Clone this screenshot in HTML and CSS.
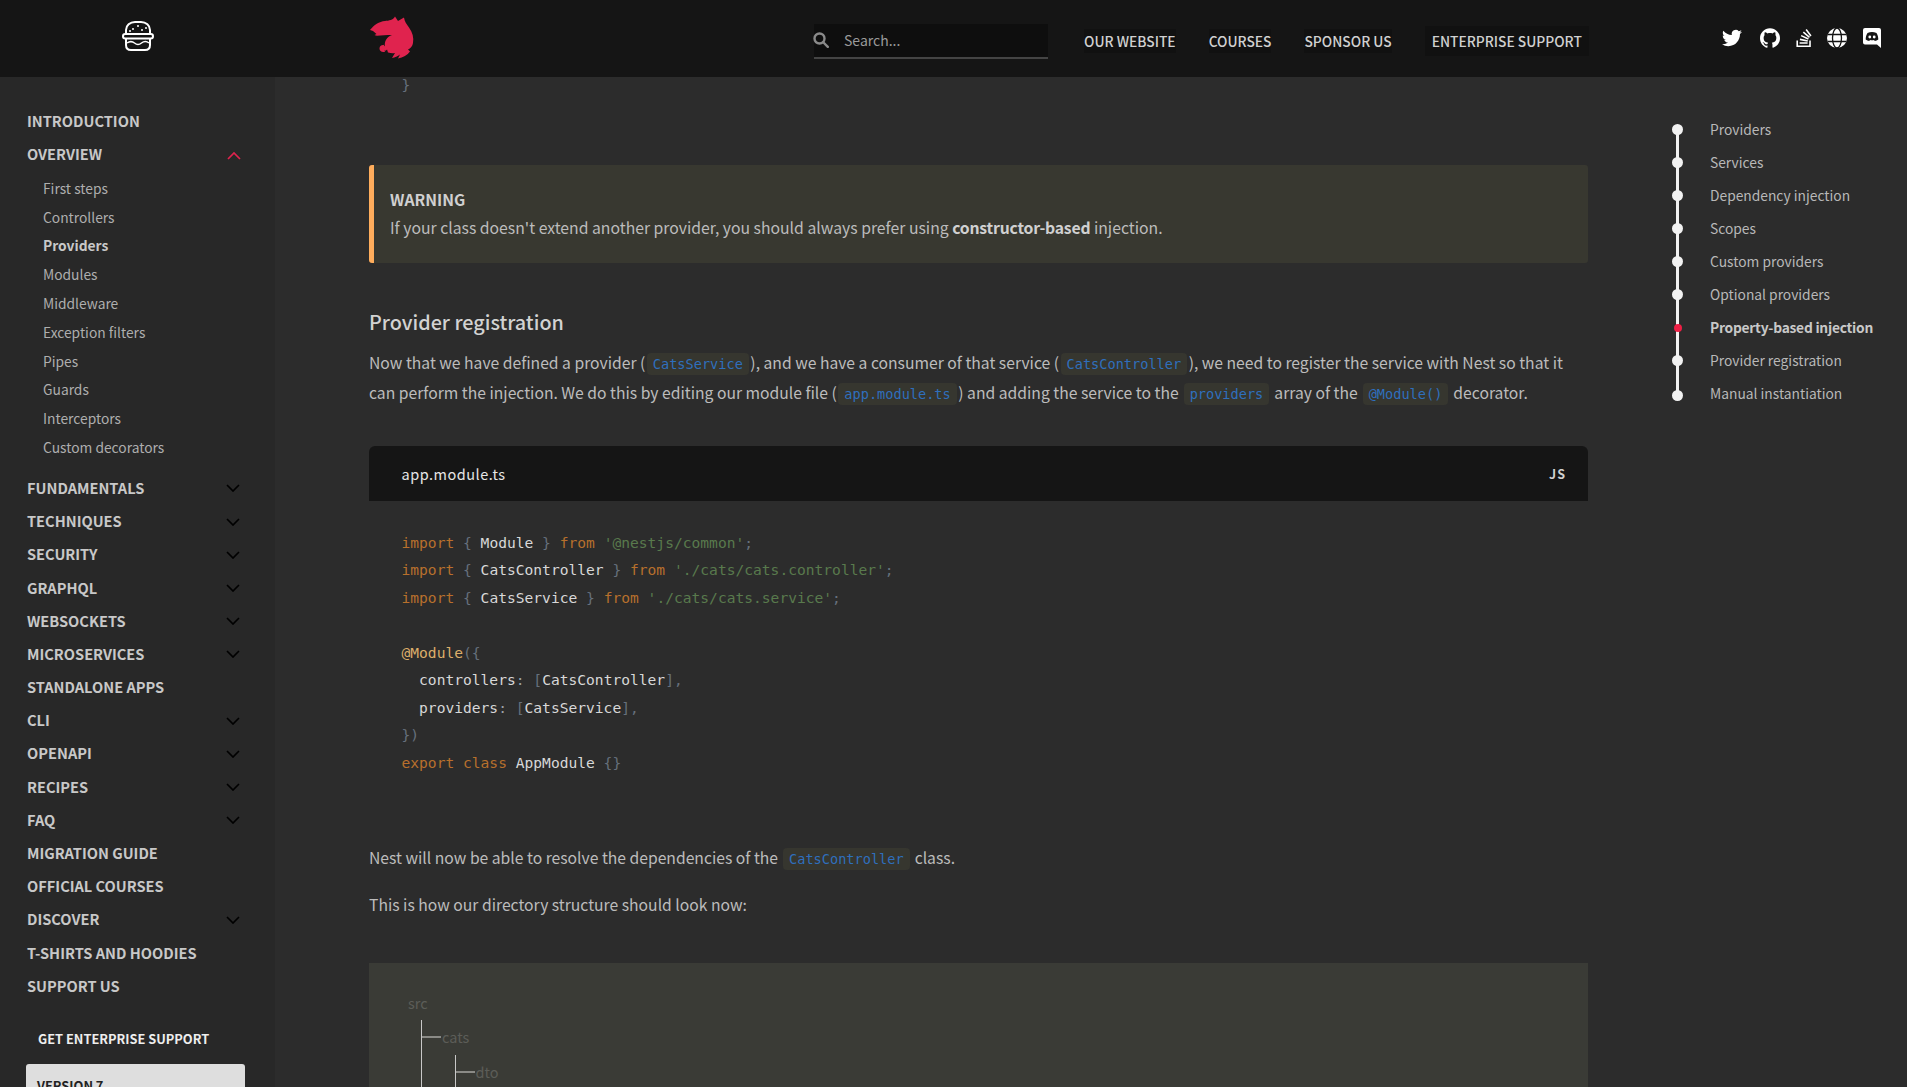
FILE: index.html
```html
<!DOCTYPE html>
<html lang="en">
<head>
  <meta charset="UTF-8" />
  <meta name="viewport" content="width=device-width, initial-scale=1.0" />
  <title>Providers | NestJS</title>
  <link rel="stylesheet" href="styles.css">
</head>
<body>
  <header class="topbar">
    <div class="burger-cell">
      <svg class="burger" viewBox="0 0 32 30" fill="none" stroke="#fff" stroke-width="2">
        <path d="M4 13V9C4 4.500 8 1 13 1h6c5 0 9 3.500 9 8v4" />
        <rect x="1" y="13" width="30" height="4.500" rx="2.250" />
        <path d="M4 17.500V24c0 3 2 5 5 5h14c3 0 5-2 5-5v-6.500" />
        <path d="M5 22c3-2 5-2 7.500 0s4.500 2 7 0 5-2 7.500 0" stroke-width="1.500" />
        <circle cx="11" cy="8" r="1" fill="#fff" stroke="none" />
        <circle cx="16" cy="5" r="1" fill="#fff" stroke="none" />
        <circle cx="20" cy="9" r="1" fill="#fff" stroke="none" />
        <circle cx="24" cy="7" r="1" fill="#fff" stroke="none" />
        <circle cx="8" cy="10" r="1" fill="#fff" stroke="none" />
      </svg>
    </div>
    <div class="topbar-main">
      <svg class="logo" viewBox="0 0 60 60">
        <path fill="#e0234e" d="M10 21C14 16 19 12.500 25 12c4-.300 8-1 10-4.500l3 4.500 6-3.500c.500 4 2.500 6.500 5 10 3.500 5 5 10 4 15.500-.500 3-2.500 5.500-5 6.500l2 2c-2.500 3.500-7 6-12 7l2-4c-2.500 2-5 3-8 3.500l3-5c-3.500.500-6.500 0-9-1.500-3.500 1.500-6.500 0-6.500-3 0-2.500 2-4 4.500-3.500-1-1.500-3-3.500-4-6l-3-2-2.500-2 2-1-3.500-3z" />
        <path fill="#151515" d="M14 26.500c5 .500 11-.500 18-.500-5 2-8 6-7 11.500-1.500-2.500-3.500-3.500-5.500-3.500-2-2.500-3.500-5-5.500-7.500z" />
        <path fill="#151515" d="M28 44c-1.500-.500-3-1-4-2.500 1.500.500 2.500 0 3-1 .500 1.500 1 2.500 1 3.500z" />
      </svg>
      <div class="search">
        <svg class="search-icon" viewBox="0 0 16 16" fill="none" stroke="#8a8a8a" stroke-width="2.400">
          <circle cx="6.500" cy="6.500" r="5" />
          <path d="M10 10l4.800 4.800" stroke-linecap="round" />
        </svg>
        <span>Search...</span>
      </div>
      <nav class="topnav">
        <a class="topnav-link">OUR WEBSITE</a>
        <a class="topnav-link">COURSES</a>
        <a class="topnav-link">SPONSOR US</a>
        <a class="topnav-link topnav-support">ENTERPRISE SUPPORT</a>
      </nav>
    </div>
    <div class="socials">
      <svg class="icon-twitter" viewBox="0 0 24 24" fill="#fff"><path d="M23.953 4.570a10 10 0 01-2.825.775 4.958 4.958 0 002.163-2.723c-.951.555-2.005.959-3.127 1.184a4.920 4.920 0 00-8.384 4.482C7.690 8.095 4.067 6.130 1.640 3.162a4.822 4.822 0 00-.666 2.475c0 1.710.870 3.213 2.188 4.096a4.904 4.904 0 01-2.228-.616v.060a4.923 4.923 0 003.946 4.827 4.996 4.996 0 01-2.212.085 4.936 4.936 0 004.604 3.417 9.867 9.867 0 01-6.102 2.105c-.390 0-.779-.023-1.170-.067a13.995 13.995 0 007.557 2.209c9.053 0 13.998-7.496 13.998-13.985 0-.210 0-.420-.015-.630A9.935 9.935 0 0024 4.590z" /></svg>
      <svg class="icon-github" viewBox="0 0 24 24" fill="#fff"><path d="M12 .297c-6.630 0-12 5.373-12 12 0 5.303 3.438 9.800 8.205 11.385.600.113.820-.258.820-.577 0-.285-.010-1.040-.015-2.040-3.338.724-4.042-1.610-4.042-1.610C4.422 18.070 3.633 17.700 3.633 17.700c-1.087-.744.084-.729.084-.729 1.205.084 1.838 1.236 1.838 1.236 1.070 1.835 2.809 1.305 3.495.998.108-.776.417-1.305.760-1.605-2.665-.300-5.466-1.332-5.466-5.930 0-1.310.465-2.380 1.235-3.220-.135-.303-.540-1.523.105-3.176 0 0 1.005-.322 3.300 1.230.960-.267 1.980-.399 3-.405 1.020.006 2.040.138 3 .405 2.280-1.552 3.285-1.230 3.285-1.230.645 1.653.240 2.873.120 3.176.765.840 1.230 1.910 1.230 3.220 0 4.610-2.805 5.625-5.475 5.920.420.360.810 1.096.810 2.220 0 1.606-.015 2.896-.015 3.286 0 .315.210.690.825.570C20.565 22.092 24 17.592 24 12.297c0-6.627-5.373-12-12-12" /></svg>
      <svg class="icon-stack" viewBox="0 0 24 24" fill="#fff"><path d="M15.725 0l-1.720 1.277 6.390 8.588 1.716-1.277L15.725 0zm-3.940 3.418l-1.369 1.644 8.225 6.850 1.369-1.644-8.225-6.850zm-3.150 4.465l-.905 1.940 9.702 4.517.904-1.940-9.701-4.517zm-1.850 4.860l-.440 2.093 10.473 2.201.440-2.092-10.473-2.203zM1.890 15.470V24h19.190v-8.530h-2.133v6.397H4.021v-6.396H1.890zm4.265 2.133v2.130h10.660v-2.130H6.154Z" /></svg>
      <svg class="icon-globe" viewBox="0 0 20 20">
        <circle cx="10" cy="10" r="10" fill="#fff" />
        <g fill="none" stroke="#151515" stroke-width="1.300">
          <ellipse cx="10" cy="10" rx="4.500" ry="10" />
          <path d="M.500 6.500h19M.500 13.500h19" />
        </g>
      </svg>
      <svg class="icon-discord" viewBox="0 0 18 20">
        <path fill="#fff" d="M2 0h14a2 2 0 012 2v18l-4-3.500H2a2 2 0 01-2-2V2a2 2 0 012-2z" />
        <path fill="#151515" d="M4.500 5c3-1.200 6-1.200 9 0 1.200 1.800 1.800 4 1.800 6.500-1.100.900-2.300 1.400-3.500 1.500l-.8-1.100c-1.300.300-2.700.300-4 0l-.8 1.100c-1.200-.100-2.400-.600-3.500-1.500C2.700 9 3.300 6.800 4.500 5z" />
        <circle cx="6.800" cy="9" r="1.400" fill="#fff" />
        <circle cx="11.200" cy="9" r="1.400" fill="#fff" />
      </svg>
    </div>
  </header>

  <div class="page">
    <aside class="sidebar">
      <a class="nav-item">INTRODUCTION</a>
      <a class="nav-item">OVERVIEW
        <svg class="chevron chevron-open" viewBox="0 0 14 8"><path d="M1 7l6-6 6 6" /></svg>
      </a>
      <ul class="nav-children">
        <li>First steps</li>
        <li>Controllers</li>
        <li class="active">Providers</li>
        <li>Modules</li>
        <li>Middleware</li>
        <li>Exception filters</li>
        <li>Pipes</li>
        <li>Guards</li>
        <li>Interceptors</li>
        <li>Custom decorators</li>
      </ul>
      <a class="nav-item">FUNDAMENTALS <svg class="chevron" viewBox="0 0 14 8"><path d="M1 1l6 6 6-6" /></svg></a>
      <a class="nav-item">TECHNIQUES <svg class="chevron" viewBox="0 0 14 8"><path d="M1 1l6 6 6-6" /></svg></a>
      <a class="nav-item">SECURITY <svg class="chevron" viewBox="0 0 14 8"><path d="M1 1l6 6 6-6" /></svg></a>
      <a class="nav-item">GRAPHQL <svg class="chevron" viewBox="0 0 14 8"><path d="M1 1l6 6 6-6" /></svg></a>
      <a class="nav-item">WEBSOCKETS <svg class="chevron" viewBox="0 0 14 8"><path d="M1 1l6 6 6-6" /></svg></a>
      <a class="nav-item">MICROSERVICES <svg class="chevron" viewBox="0 0 14 8"><path d="M1 1l6 6 6-6" /></svg></a>
      <a class="nav-item">STANDALONE APPS</a>
      <a class="nav-item">CLI <svg class="chevron" viewBox="0 0 14 8"><path d="M1 1l6 6 6-6" /></svg></a>
      <a class="nav-item">OPENAPI <svg class="chevron" viewBox="0 0 14 8"><path d="M1 1l6 6 6-6" /></svg></a>
      <a class="nav-item">RECIPES <svg class="chevron" viewBox="0 0 14 8"><path d="M1 1l6 6 6-6" /></svg></a>
      <a class="nav-item">FAQ <svg class="chevron" viewBox="0 0 14 8"><path d="M1 1l6 6 6-6" /></svg></a>
      <a class="nav-item">MIGRATION GUIDE</a>
      <a class="nav-item">OFFICIAL COURSES</a>
      <a class="nav-item">DISCOVER <svg class="chevron" viewBox="0 0 14 8"><path d="M1 1l6 6 6-6" /></svg></a>
      <a class="nav-item">T-SHIRTS AND HOODIES</a>
      <a class="nav-item">SUPPORT US</a>
      <a class="enterprise-link">GET ENTERPRISE SUPPORT</a>
      <div class="version-box">VERSION 7</div>
    </aside>

    <main class="content">
      <pre class="code-tail"><span class="p">}</span></pre>

      <div class="warning">
        <strong class="warning-title">WARNING</strong>
        <p>If your class doesn't extend another provider, you should always prefer using <strong class="strong-tight">constructor-based</strong> injection.</p>
      </div>

      <h3 class="section-title">Provider registration</h3>
      <p class="text text-first">Now that we have defined a provider (<code>CatsService</code>), and we have a consumer of that service (<code>CatsController</code>), we need to register the service with Nest so that it can perform the injection. We do this by editing our module file (<code>app.module.ts</code>) and adding the service to the <code>providers</code> array of the <code>@Module()</code> decorator.</p>

      <div class="code-block">
        <div class="code-header">
          <span class="code-file">app.module.ts</span>
          <span class="code-lang">JS</span>
        </div>
<pre class="code-body"><span class="k">import</span> <span class="p">{</span> Module <span class="p">}</span> <span class="k">from</span> <span class="s">'@nestjs/common'</span><span class="p">;</span>
<span class="k">import</span> <span class="p">{</span> CatsController <span class="p">}</span> <span class="k">from</span> <span class="s">'./cats/cats.controller'</span><span class="p">;</span>
<span class="k">import</span> <span class="p">{</span> CatsService <span class="p">}</span> <span class="k">from</span> <span class="s">'./cats/cats.service'</span><span class="p">;</span>

<span class="d">@Module</span><span class="p">({</span>
  controllers<span class="n">:</span> <span class="p">[</span>CatsController<span class="p">],</span>
  providers<span class="n">:</span> <span class="p">[</span>CatsService<span class="p">],</span>
<span class="p">})</span>
<span class="k">export</span> <span class="k">class</span> AppModule <span class="p">{}</span></pre>
      </div>

      <p class="text text-after-code">Nest will now be able to resolve the dependencies of the <code>CatsController</code> class.</p>
      <p class="text text-next">This is how our directory structure should look now:</p>

      <div class="tree">
        <div class="tree-label tree-root">src</div>
        <div class="tree-group">
          <div class="tree-row"><span class="tree-dash"></span><span class="tree-label">cats</span></div>
          <div class="tree-group tree-group-inner">
            <div class="tree-row"><span class="tree-dash"></span><span class="tree-label">dto</span></div>
          </div>
        </div>
      </div>
    </main>

    <aside class="toc">
      <ul class="toc-list">
        <li>Providers</li>
        <li>Services</li>
        <li>Dependency injection</li>
        <li>Scopes</li>
        <li>Custom providers</li>
        <li>Optional providers</li>
        <li class="active">Property-based injection</li>
        <li>Provider registration</li>
        <li>Manual instantiation</li>
      </ul>
    </aside>
  </div>
</body>
</html>
```

FILE: styles.css
```css
* {
  margin: 0;
  padding: 0;
  box-sizing: border-box;
}

html, body {
  height: 100%;
  overflow: hidden;
}

body {
  font-family: "Noto Sans CJK JP", "Noto Sans", sans-serif;
  background: #2c2c2c;
  color: #bcbcbc;
  display: flex;
  flex-direction: column;
}

/* top bar */
.topbar {
  height: 77px;
  flex: none;
  background: #151515;
  display: flex;
  align-items: center;
  white-space: nowrap;
}

.burger-cell {
  width: 275px;
  flex: none;
  display: flex;
  justify-content: center;
  padding-bottom: 5px;
}

.burger {
  width: 32px;
  height: 30px;
}

.topbar-main {
  width: 1219px;
  flex: none;
  margin-left: 94px;
  display: flex;
  align-items: center;
}

.logo {
  width: 60px;
  height: 60px;
  flex: none;
  margin-left: -9px;
}

.search {
  width: 234px;
  height: 35px;
  flex: none;
  margin-left: 394px;
  margin-top: 5px;
  background: #0e0e0e;
  border-bottom: 2px solid #444;
  display: flex;
  align-items: center;
  gap: 15px;
  color: #9a9a9a;
  font-size: 14px;
}

.search-icon {
  width: 16px;
  height: 16px;
  margin-left: -1px;
}

.topnav {
  display: flex;
  align-items: center;
  margin-left: 36px;
  margin-top: 4px;
  gap: 33px;
}

.topnav-link {
  background: #111;
  color: #d0d0d0;
  font-size: 13.8px;
  font-weight: 500;
  line-height: 24px;
}

.topnav-support {
  padding: 3px 7px;
}

.socials {
  display: flex;
  align-items: center;
  margin-left: 133px;
  padding-bottom: 2px;
}

.icon-twitter { width: 22px; height: 20px; flex: none; }
.icon-github { width: 20px; height: 20px; flex: none; margin-left: 17px; }
.icon-stack { width: 18px; height: 18px; flex: none; margin-left: 15px; }
.icon-globe { width: 20px; height: 20px; flex: none; margin-left: 14px; }
.icon-discord { width: 18px; height: 20px; flex: none; margin-left: 16px; }

/* page columns */
.page {
  flex: 1;
  min-height: 0;
  display: flex;
}

.sidebar {
  width: 275px;
  flex: none;
  background: #282828;
  padding: 27px 34px 0 27px;
}

.nav-item {
  height: 33.2px;
  display: flex;
  align-items: center;
  justify-content: space-between;
  color: #c8c8c8;
  font-size: 14.6px;
  font-weight: 700;
}

.chevron {
  width: 14px;
  height: 8px;
  fill: none;
  stroke: #000;
  stroke-width: 1.7;
  margin: 2px 1px 0 0;
}

.chevron-open {
  stroke: #e0234e;
  margin: 4px 0 0;
}

.nav-children {
  list-style: none;
  padding-left: 16px;
  margin: 3.5px 0 9px;
}

.nav-children li {
  height: 28.8px;
  line-height: 28.8px;
  font-size: 13.8px;
  color: #aeaeae;
}

.nav-children .active {
  color: #c8c8c8;
  font-weight: 700;
}

.enterprise-link {
  display: block;
  margin: 25px 0 13px 11px;
  color: #eee;
  font-size: 12.8px;
  font-weight: 700;
  line-height: 24px;
}

.version-box {
  width: 219px;
  margin-left: -1px;
  height: 60px;
  padding: 12px 11px;
  background: #dedede;
  border-radius: 3px;
  color: #222;
  font-size: 12.8px;
  font-weight: 700;
}

/* main column */
.content {
  width: 1219px;
  flex: none;
  margin-left: 94px;
  overflow: hidden;
}

code, pre {
  font-family: "DejaVu Sans Mono", monospace;
}

.code-tail {
  height: 88px;
  padding-left: 32.5px;
  font-size: 14.6px;
  line-height: 16px;
}

.warning {
  height: 98px;
  padding: 21px 16px;
  background: #383830;
  border-left: 5px solid #ffad5c;
  border-radius: 3px;
  font-size: 15.75px;
  line-height: 28px;
}

.warning-title {
  display: block;
  color: #c8c8c8;
  font-weight: 700;
}

.warning strong {
  color: #d0d0d0;
}

.strong-tight {
  letter-spacing: -0.2px;
}

.section-title {
  margin-top: 44px;
  font-size: 19.8px;
  font-weight: 500;
  line-height: 30px;
  color: #d2d2d2;
}

.text {
  font-size: 15.7px;
  line-height: 30px;
}

.text-first { margin-top: 11px; }
.text-after-code { margin-top: 44px; }
.text-next { margin-top: 17px; }

.text code {
  margin: 0 1.5px;
  padding: 3px 6px;
  background: #36362f;
  border-radius: 4px;
  color: #2f6fbd;
  font-size: 13.6px;
  line-height: 1;
}

.code-block {
  margin-top: 38px;
}

.code-header {
  height: 55px;
  padding: 0 22px 0 32.5px;
  display: flex;
  align-items: center;
  justify-content: space-between;
  background: #151515;
  border-radius: 6px 6px 0 0;
}

.code-file {
  color: #e6e6e6;
  font-size: 14.5px;
  letter-spacing: 0.5px;
}

.code-lang {
  color: #d0d0d0;
  font-size: 12.5px;
  font-weight: 700;
  letter-spacing: 1px;
}

.code-body {
  padding: 28px 32.5px 23px;
  font-size: 14.6px;
  line-height: 27.45px;
  color: #d8d8d8;
}

.k { color: #b8702c; }
.s { color: #597a4d; }
.p { color: #66707c; }
.d { color: #dcae6a; }
.n { color: #9aa0a6; }

/* directory tree */
.tree {
  margin-top: 43px;
  height: 200px;
  padding: 28px 39px;
  background: #3a3b36;
  font-size: 14.5px;
  line-height: 24px;
}

.tree-label {
  color: #5c5d58;
}

.tree-group {
  min-height: 140px;
  margin: 5px 0 0 13px;
  border-left: 1px solid #c8c8c8;
  padding-top: 5px;
}

.tree-group-inner {
  margin: 6px 0 0 32.5px;
  padding-top: 5px;
}

.tree-row {
  display: flex;
  align-items: center;
  height: 24px;
  gap: 1px;
}

.tree-dash {
  width: 19px;
  height: 2px;
  background: #8a8a86;
}

/* right hand outline */
.toc {
  margin-left: 84px;
  padding-top: 35px;
}

.toc-list {
  list-style: none;
  position: relative;
}

.toc-list::before {
  content: "";
  position: absolute;
  left: 4px;
  top: 16px;
  bottom: 14px;
  width: 3px;
  background: #f2f2f2;
}

.toc-list li {
  position: relative;
  height: 33px;
  display: flex;
  align-items: center;
  gap: 27px;
  font-size: 13.8px;
  color: #b8b8b8;
}

.toc-list li::before {
  content: "";
  width: 11px;
  height: 11px;
  flex: none;
  border-radius: 50%;
  background: #f2f2f2;
  transform: translateY(1px);
}

.toc-list li:last-child::before {
  transform: translateY(3px);
}

.toc-list .active {
  font-weight: 700;
  color: #c8c8c8;
  letter-spacing: -0.25px;
}

.toc-list .active::before {
  width: 8px;
  height: 8px;
  margin: 0 1.5px;
  background: #ed1f45;
}
```
